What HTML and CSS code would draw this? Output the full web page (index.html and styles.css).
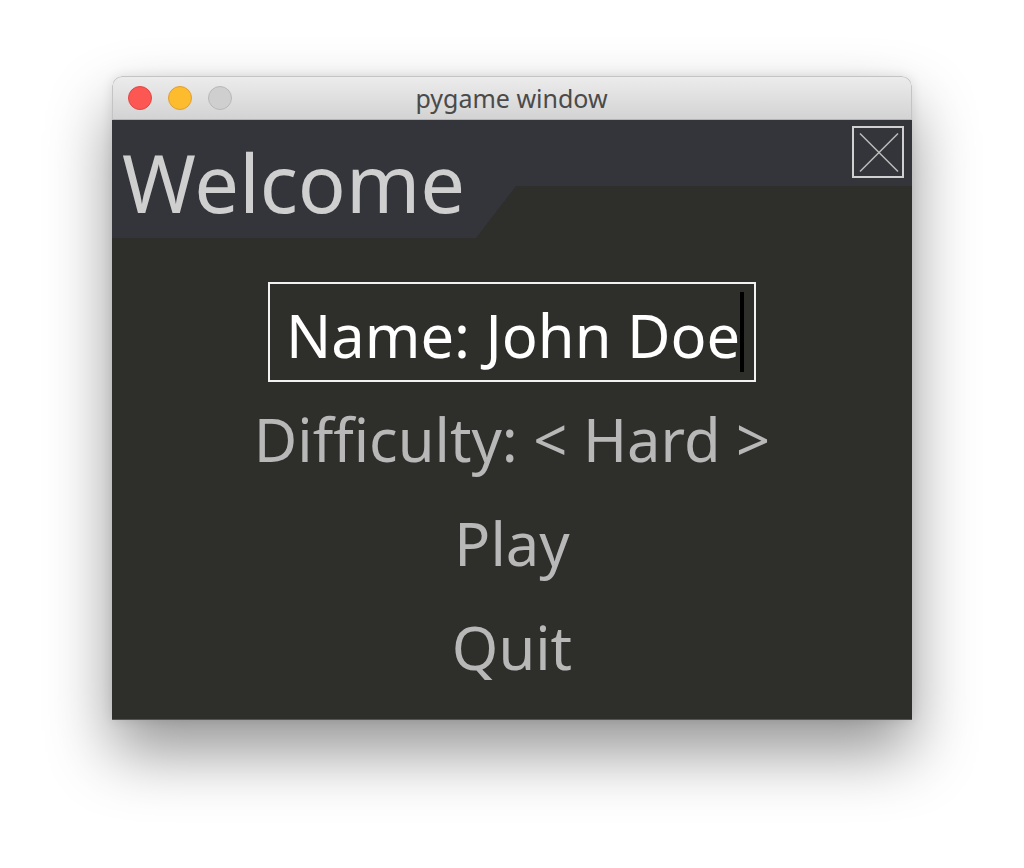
FILE: index.html
```html
<!DOCTYPE html>
<html>
	<head>
		<title>pygame window</title>
		<link rel="stylesheet" href="styles.css">
	</head>
	<body>
		<div class="window">
			<div class="titlebar">
				<div class="lights">
					<span class="light red"></span>
					<span class="light yellow"></span>
					<span class="light grey"></span>
				</div>
				<p class="window_title">pygame window</p>
			</div>
			<div class="game">
				<div class="header">
					<h1 class="welcome">Welcome</h1>
					<button class="close_btn">
						<svg width="52" height="52" viewBox="0 0 52 52">
							<path d="M8 7.5L46 45.5M46 7.5L8 45.5" stroke="#bcbcbc" stroke-width="1.5" fill="none"/>
						</svg>
					</button>
				</div>
				<div class="menu">
					<div class="menu_item selected">Name: John Doe<span class="cursor"></span></div>
					<div class="menu_item">Difficulty: &lt; Hard &gt;</div>
					<div class="menu_item">Play</div>
					<div class="menu_item">Quit</div>
				</div>
			</div>
		</div>
	</body>
</html>
```
FILE: styles.css
```css
html, body {
	margin: 0;
	height: 868px;
	overflow: hidden;
	background: #ffffff;
}
body {
	padding: 76px 0 0 112px;
	box-sizing: border-box;
}
.window {
	width: 800px;
	height: 644px;
	border-radius: 10px 10px 0 0;
	box-shadow: 0 32px 64px rgba(0, 0, 0, 0.42), 0 0 12px rgba(0, 0, 0, 0.1);
	overflow: hidden;
}
.titlebar {
	height: 44px;
	box-sizing: border-box;
	display: flex;
	align-items: center;
	background: linear-gradient(#ececec, #d3d3d3);
	border: 1px solid #c4c4c4;
	border-bottom: 1px solid #b4b4b4;
	border-radius: 10px 10px 0 0;
}
.lights {
	display: flex;
	gap: 16px;
	padding-left: 15px;
}
.light {
	width: 24px;
	height: 24px;
	box-sizing: border-box;
	border-radius: 50%;
	border: 1px solid;
}
.red {
	background: #fc5753;
	border-color: #df4744;
}
.yellow {
	background: #fdbc2e;
	border-color: #de9f34;
}
.grey {
	background: #cfcfcf;
	border-color: #b8b8b8;
}
.window_title {
	flex: 1;
	margin: 0 0 0 -120px;
	text-align: center;
	font-family: "Noto Sans", sans-serif;
	font-size: 25px;
	color: #4a4a4a;
}
.game {
	height: 600px;
	background: #2e2e2a;
	box-shadow: inset 0 -1px 0 #55554f;
}
.header {
	height: 118px;
	display: flex;
	justify-content: space-between;
	align-items: flex-start;
	background: #33353a;
	clip-path: polygon(0 0, 800px 0, 800px 66px, 404px 66px, 364px 118px, 0 118px);
}
.welcome {
	margin: 8px 0 0 10px;
	font-family: "Noto Sans", sans-serif;
	font-weight: normal;
	font-size: 79.5px;
	line-height: 108px;
	color: #cfcfcf;
}
.close_btn {
	width: 52px;
	height: 52px;
	margin: 6px 8px 0 0;
	padding: 0;
	box-sizing: border-box;
	background: none;
	border: 2px solid #d0d0d0;
	display: flex;
	align-items: center;
	justify-content: center;
}
.close_btn svg {
	flex: none;
}
.menu {
	margin-top: 44px;
	display: flex;
	flex-direction: column;
	align-items: center;
	font-family: "Noto Sans", sans-serif;
	font-size: 59.6px;
	color: #b8b8b8;
}
.menu_item {
	height: 100px;
	margin-bottom: 4px;
	padding-top: 4px;
	box-sizing: border-box;
	display: flex;
	align-items: center;
	white-space: nowrap;
}
.selected {
	width: 488px;
	padding-left: 16px;
	border: 2px solid #f2f2f2;
	color: #ffffff;
}
.cursor {
	width: 4px;
	height: 80px;
	margin: -4px 0 0 0;
	background: #000000;
}
```
